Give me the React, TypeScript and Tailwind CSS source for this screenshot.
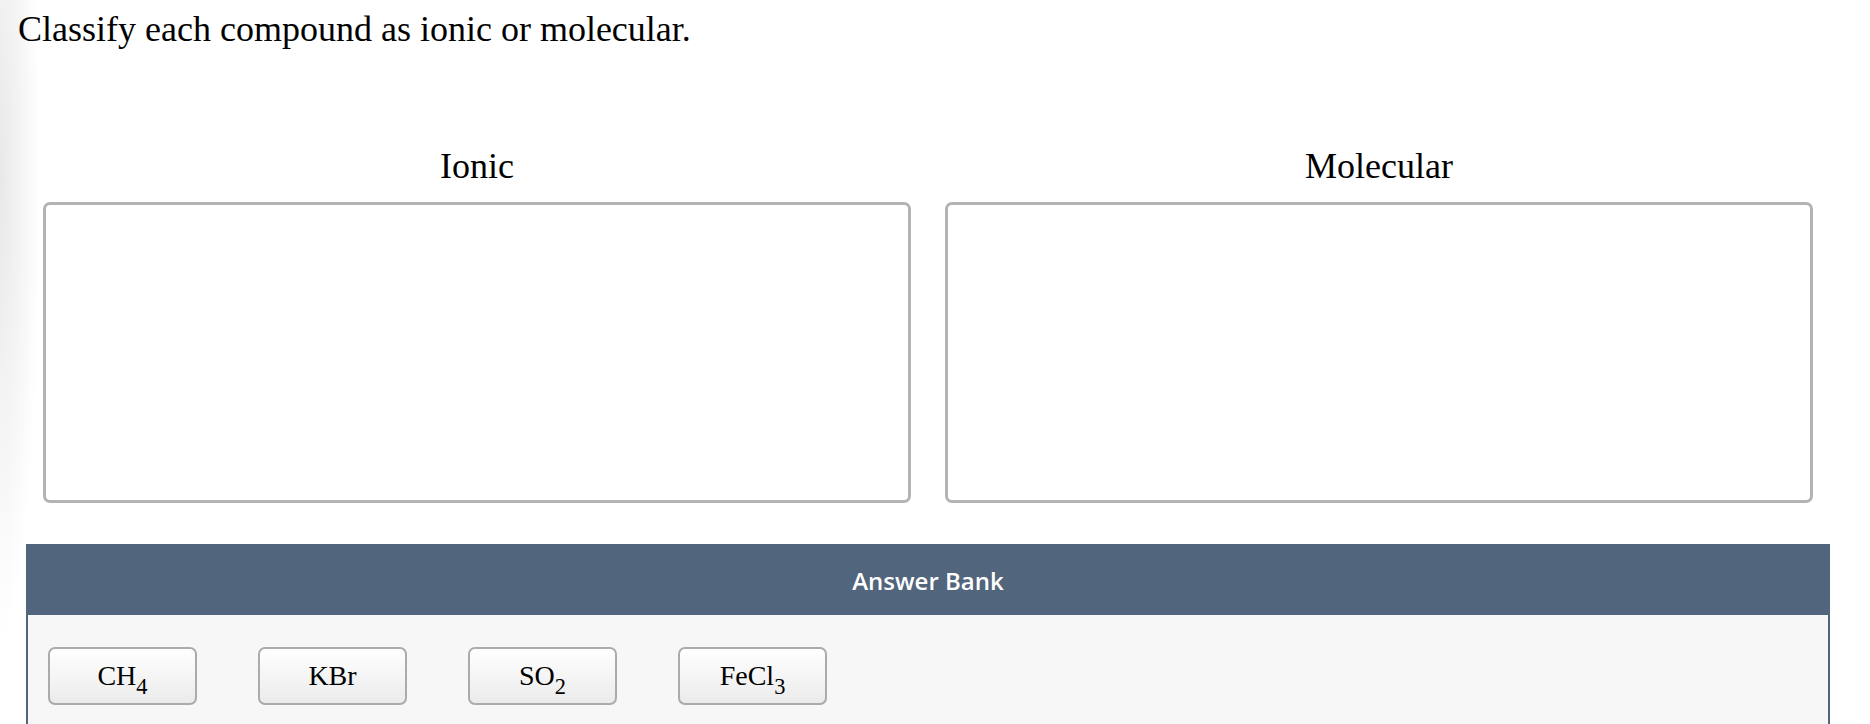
import React from "react";

const compounds: { base: string; sub?: string }[] = [
  { base: "CH", sub: "4" },
  { base: "KBr" },
  { base: "SO", sub: "2" },
  { base: "FeCl", sub: "3" },
];

function DropZone({ label }: { label: string }) {
  return (
    <div className="flex flex-col">
      <div className="text-center text-[36px] leading-[36px]">{label}</div>
      <div className="mt-[18px] h-[301px] rounded-[7px] border-[3px] border-[#b3b3b3] bg-white" />
    </div>
  );
}

export default function App() {
  return (
    <div className="min-h-screen bg-white bg-[image:radial-gradient(ellipse_40px_460px_at_0_180px,#e8e8e8,#ffffff)] font-['Liberation_Serif','Times_New_Roman',serif] text-black">
      <h1 className="pl-[18px] pt-[11px] text-[36px] font-normal leading-[36px]">
        Classify each compound as ionic or molecular.
      </h1>

      <div className="ml-[43px] mt-[101px] grid w-[1770px] grid-cols-2 gap-[34px]">
        <DropZone label="Ionic" />
        <DropZone label="Molecular" />
      </div>

      <div className="ml-[26px] mt-[41px] w-[1804px]">
        <div className="flex h-[71px] items-center justify-center bg-[#51657c] pt-[2px] font-['Open_Sans',sans-serif] text-[24px] font-semibold text-white">
          Answer Bank
        </div>
        <div className="flex gap-[61px] border-x-2 border-[#51657c] bg-[#f7f7f7] px-[20px] pb-[30px] pt-[32px]">
          {compounds.map((c) => (
            <div
              key={c.base}
              className="flex h-[58px] w-[149px] items-center justify-center rounded-[7px] border-2 border-[#ababab] bg-gradient-to-b from-white to-[#ebebeb] text-[28px] leading-none"
            >
              <span>
                {c.base}
                {c.sub && (
                  <span className="relative top-[0.38em] text-[0.8em]">
                    {c.sub}
                  </span>
                )}
              </span>
            </div>
          ))}
        </div>
      </div>
    </div>
  );
}
